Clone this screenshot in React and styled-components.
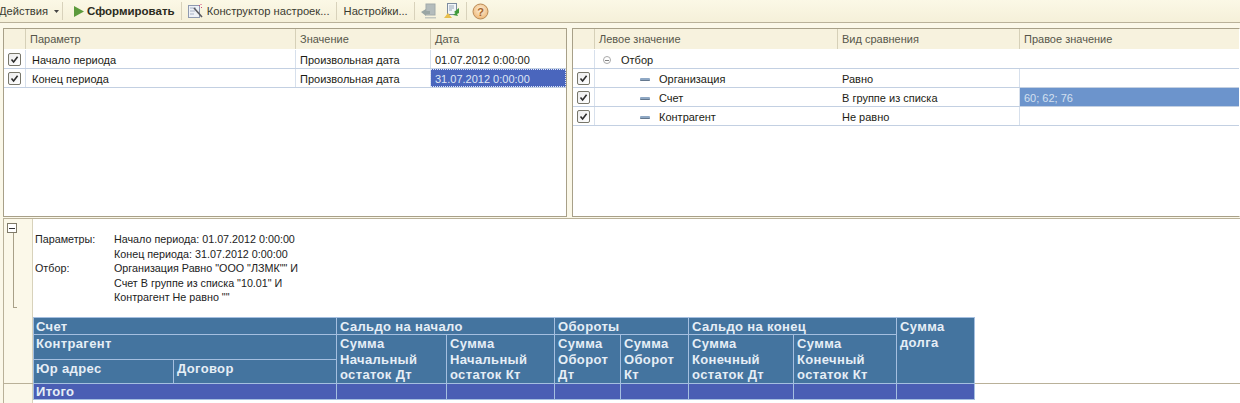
import React from "react";
import styled, { createGlobalStyle } from "styled-components";

const GlobalStyle = createGlobalStyle`
  html, body {
    margin: 0;
    padding: 0;
    background: #fbf8e9;
  }
  body {
    font-family: "Liberation Sans", Arial, sans-serif;
    font-size: 11px;
    color: #1c1c14;
  }
`;

const Page = styled.div`
  width: 1240px;
  height: 403px;
  overflow: hidden;
  display: flex;
  flex-direction: column;
`;

const Toolbar = styled.div`
  height: 22px;
  display: flex;
  align-items: center;
  background: linear-gradient(#fbf8e6, #f5f0d9);
  border-bottom: 1px solid #b9b199;
  box-sizing: content-box;
  color: #3a3a30;
`;

const ToolText = styled.span`
  white-space: nowrap;
  font-size: ${(props) => (props.$bold ? 11.5 : 11.2)}px;
  margin-left: ${(props) => props.$left || 0}px;
  font-weight: ${(props) => (props.$bold ? 700 : 400)};
  color: ${(props) => (props.$bold ? "#2b2b20" : "#3a3a30")};
`;

const ToolSep = styled.div`
  width: 1px;
  height: 18px;
  background: #d8d2bb;
  margin-left: ${(props) => props.$left}px;
`;

const ToolIcon = styled.svg`
  flex: none;
  margin-left: ${(props) => props.$left}px;
`;

const Panels = styled.div`
  display: flex;
  gap: 5px;
  padding: 5px 0 0 3px;
  height: 189px;
`;

const Panel = styled.div`
  width: ${(props) => props.$width}px;
  height: 189px;
  box-sizing: border-box;
  background: #fff;
  border: 1px solid #a8a088;
  border-right-color: ${(props) => (props.$open ? "transparent" : "#a8a088")};
`;

const Row = styled.div`
  display: grid;
  grid-template-columns: ${(props) => props.$cols};
  height: ${(props) => (props.$head ? 21 : 19)}px;
  box-sizing: border-box;
  background: ${(props) => (props.$head ? "#f7f2de" : "#fff")};
  border-bottom: 1px solid ${(props) => (props.$head ? "#fff" : "#c3d0e2")};
`;

const HeadCell = styled.div`
  display: flex;
  align-items: center;
  padding-left: 4px;
  border-left: 1px solid ${(props) => (props.$first ? "transparent" : "#d6d0b8")};
  color: #56564a;
  white-space: nowrap;
`;

const Cell = styled.div`
  display: flex;
  align-items: center;
  padding: 2px 0 0 ${(props) => props.$pad || 4}px;
  border-left: 1px solid ${(props) => (props.$first ? "transparent" : "#d7e0ec")};
  white-space: nowrap;
  color: ${(props) => (props.$value ? "#d4e0f0" : "#1c1c14")};
  background: ${(props) => (props.$value ? "#6c94cc" : "transparent")};
`;

const ActiveCell = styled(Cell)`
  background: #4a66bd;
  color: #dfe6f6;
  outline: 1px dotted #dfe6f6;
  outline-offset: -1px;
`;

const GroupCell = styled(Cell)`
  grid-column: 2 / -1;
`;

const KindCell = styled(Cell)`
  border-left-color: transparent;
`;

const CheckBox = styled.span`
  width: 11px;
  height: 11px;
  margin-top: -2px;
  border: 1px solid #77766a;
  border-radius: 2px;
  background: linear-gradient(135deg, #ececec, #fff);
  display: flex;
  align-items: center;
  justify-content: center;
`;

const TreeDash = styled.span`
  width: 10px;
  height: 3px;
  margin-left: ${(props) => props.$left}px;
  margin-right: 9px;
  border-radius: 1px;
  background: #8fa8c4;
  border: 0 solid #64788e;
  border-bottom-width: 1px;
  box-sizing: border-box;
`;

const TreeToggle = styled.span`
  width: 6px;
  height: 6px;
  margin-left: 3px;
  margin-right: 10px;
  border: 1px solid #a9a9a9;
  border-radius: 50%;
  display: flex;
  align-items: center;
  justify-content: center;
  &::after {
    content: "";
    width: 4px;
    height: 1px;
    background: #808080;
  }
`;

const Report = styled.div`
  flex: 1;
  display: flex;
  position: relative;
  margin: 1px 0 0 3px;
  border-top: 1px solid #b9b199;
  border-left: 1px solid #b9b199;
  background: #fff;
  min-height: 0;
`;

const Gutter = styled.div`
  width: 28px;
  flex: none;
  background: #fbf8e9;
  border-right: 1px solid #d8d2bb;
`;

const Fold = styled.div`
  width: 8px;
  height: 8px;
  margin: 4px 0 0 3px;
  border: 1px solid #7f7a68;
  background: #fff;
  display: flex;
  align-items: center;
  justify-content: center;
  &::after {
    content: "";
    width: 6px;
    height: 1px;
    background: #333;
  }
`;

const FoldLine = styled.div`
  width: 3px;
  height: 74px;
  margin-left: 9px;
  border-left: 1px solid #a8a088;
  border-bottom: 1px solid #a8a088;
`;

const ReportBody = styled.div`
  flex: 1;
  min-width: 0;
`;

const Settings = styled.div`
  height: 98px;
  padding: 13px 0 0 2px;
  box-sizing: border-box;
  font-size: 10.75px;
  line-height: 14.5px;
  color: #222;
  display: grid;
  grid-template-columns: 79px 1fr;
  align-content: start;
`;

const Table = styled.table`
  border-collapse: collapse;
  table-layout: fixed;
  width: 941px;
  font-size: 13px;
  font-weight: 700;
  letter-spacing: 0.35px;
  line-height: 15.5px;
  color: #e6eef6;
`;

const Th = styled.td`
  background: #44749f;
  border: 1px solid #a5bfe0;
  padding: 1px 0 0 ${(props) => (props.$first ? 2 : 3)}px;
  line-height: ${(props) => (props.$tight ? "15px" : "inherit")};
  vertical-align: top;
  overflow: hidden;
  white-space: nowrap;
`;

const TotalTh = styled(Th)`
  background: #4a5eb4;
  border-top-color: #a8a890;
  padding-top: 0;
  line-height: 14px;
  vertical-align: middle;
`;

const RuleLine = styled.div`
  position: absolute;
  left: ${(props) => props.$left}px;
  right: ${(props) => (props.$open ? 0 : "auto")};
  width: ${(props) => (props.$open ? "auto" : `${props.$width}px`)};
  top: 164px;
  height: 1px;
  background: #b9b199;
`;

const HeadRow = styled.tr`
  height: ${(props) => props.$height}px;
`;

const leftCols = "21px 270px 135px 1fr";
const rightCols = "21px 243px 182px 1fr";

const Check = () => (
  <CheckBox>
    <svg width="9" height="9" viewBox="0 0 9 9">
      <path d="M1.5 4.5 L3.6 7 L7.6 1.8" fill="none" stroke="#2c2c2c" strokeWidth="1.6" />
    </svg>
  </CheckBox>
);

const filters = [
  { name: "Организация", kind: "Равно", value: "" },
  { name: "Счет", kind: "В группе из списка", value: "60; 62; 76" },
  { name: "Контрагент", kind: "Не равно", value: "" },
];

const colWidths = [140, 163, 110, 108, 66, 68, 105, 103, 78];

export default function App() {
  return (
    <Page>
      <GlobalStyle />
      <Toolbar>
        <ToolText $left={-1}>Действия</ToolText>
        <ToolIcon $left={6} width="5" height="3" viewBox="0 0 5 3">
          <path d="M0 0h5L2.5 3z" fill="#444" />
        </ToolIcon>
        <ToolSep $left={3} />
        <ToolIcon $left={11} width="10" height="11" viewBox="0 0 10 11">
          <path d="M0 0 L10 5.5 L0 11z" fill="#5c9a3c" />
        </ToolIcon>
        <ToolText $left={3} $bold>Сформировать</ToolText>
        <ToolSep $left={6} />
        <ToolIcon $left={6} width="15" height="15" viewBox="0 0 15 15">
          <rect x="0.5" y="1.5" width="11" height="12" fill="#eef1f6" stroke="#8f9ab0" />
          <path d="M2 4h6M2 7h5M2 10h4" stroke="#a8b2c6" />
          <path d="M6 4 L14 13" stroke="#5a5a60" strokeWidth="1.6" />
          <path d="M11 1l1 1M14 3l-1 1M13 0v1" stroke="#d04a7a" />
        </ToolIcon>
        <ToolText $left={4}>Конструктор настроек...</ToolText>
        <ToolSep $left={6} />
        <ToolText $left={7}>Настройки...</ToolText>
        <ToolSep $left={6} />
        <ToolIcon $left={6} width="16" height="16" viewBox="0 0 16 16">
          <rect x="5" y="1" width="9" height="11" fill="#b4bcbc" stroke="#a2aaaa" />
          <path d="M0 9l5-3v2h4v3H5v2z" fill="#9aa6a4" />
          <rect x="4" y="14" width="11" height="1.5" fill="#c4c8c0" />
        </ToolIcon>
        <ToolIcon $left={7} width="16" height="16" viewBox="0 0 16 16">
          <rect x="3.5" y="0.5" width="9" height="11" fill="#f2f5f8" stroke="#7d8ca0" />
          <path d="M5 3h5M5 5h5M5 7h3" stroke="#9aa8b8" />
          <path d="M15 5l-5 4 1.5 1-2.5 2 5 1-1-2 2-1z" fill="#3f9a3a" />
          <path d="M0 15l4-5 4 5z" fill="#e8bf4c" />
        </ToolIcon>
        <ToolSep $left={6} />
        <ToolIcon $left={5} width="17" height="17" viewBox="0 0 17 17">
          <defs>
            <radialGradient id="helpFill" cx="0.5" cy="0.4" r="0.6">
              <stop offset="0" stopColor="#fdf1dc" />
              <stop offset="1" stopColor="#eeb777" />
            </radialGradient>
          </defs>
          <circle cx="8.5" cy="8.5" r="7.5" fill="url(#helpFill)" stroke="#b98a56" />
          <text x="8.5" y="12.5" textAnchor="middle" fontSize="11" fontWeight="700" fontFamily="Liberation Sans" fill="#a8642a">?</text>
        </ToolIcon>
      </Toolbar>
      <Panels>
        <Panel $width={564}>
          <Row $head $cols={leftCols}>
            <HeadCell $first />
            <HeadCell>Параметр</HeadCell>
            <HeadCell>Значение</HeadCell>
            <HeadCell>Дата</HeadCell>
          </Row>
          <Row $cols={leftCols}>
            <Cell $first $pad={3}><Check /></Cell>
            <Cell $pad={6}>Начало периода</Cell>
            <Cell>Произвольная дата</Cell>
            <Cell>01.07.2012 0:00:00</Cell>
          </Row>
          <Row $cols={leftCols}>
            <Cell $first $pad={3}><Check /></Cell>
            <Cell $pad={6}>Конец периода</Cell>
            <Cell>Произвольная дата</Cell>
            <ActiveCell>31.07.2012 0:00:00</ActiveCell>
          </Row>
        </Panel>
        <Panel $width={668} $open>
          <Row $head $cols={rightCols}>
            <HeadCell $first />
            <HeadCell>Левое значение</HeadCell>
            <HeadCell>Вид сравнения</HeadCell>
            <HeadCell>Правое значение</HeadCell>
          </Row>
          <Row $cols={rightCols}>
            <Cell $first />
            <GroupCell $pad={5}><TreeToggle />Отбор</GroupCell>
          </Row>
          {filters.map((item) => (
            <Row key={item.name} $cols={rightCols}>
              <Cell $first $pad={3}><Check /></Cell>
              <Cell $pad={1}><TreeDash $left={44} />{item.name}</Cell>
              <KindCell>{item.kind}</KindCell>
              {item.value ? <Cell $value>{item.value}</Cell> : <Cell />}
            </Row>
          ))}
        </Panel>
      </Panels>
      <Report>
        <Gutter>
          <Fold />
          <FoldLine />
        </Gutter>
        <ReportBody>
          <Settings>
            <span>Параметры:</span>
            <span>Начало периода: 01.07.2012 0:00:00</span>
            <span />
            <span>Конец периода: 31.07.2012 0:00:00</span>
            <span>Отбор:</span>
            <span>Организация Равно "ООО "ЛЗМК"" И</span>
            <span />
            <span>Счет В группе из списка "10.01" И</span>
            <span />
            <span>Контрагент Не равно ""</span>
          </Settings>
          <Table>
            <colgroup>
              {colWidths.map((w, i) => (
                <col key={i} width={w} />
              ))}
            </colgroup>
            <tbody>
              <HeadRow $height={17}>
                <Th $first $tight colSpan={2}>Счет</Th>
                <Th $tight colSpan={2}>Сальдо на начало</Th>
                <Th $tight colSpan={2}>Обороты</Th>
                <Th $tight colSpan={2}>Сальдо на конец</Th>
                <Th rowSpan={3}>Сумма<br />долга</Th>
              </HeadRow>
              <HeadRow $height={25}>
                <Th $first colSpan={2}>Контрагент</Th>
                <Th rowSpan={2}>Сумма<br />Начальный<br />остаток Дт</Th>
                <Th rowSpan={2}>Сумма<br />Начальный<br />остаток Кт</Th>
                <Th rowSpan={2}>Сумма<br />Оборот<br />Дт</Th>
                <Th rowSpan={2}>Сумма<br />Оборот<br />Кт</Th>
                <Th rowSpan={2}>Сумма<br />Конечный<br />остаток Дт</Th>
                <Th rowSpan={2}>Сумма<br />Конечный<br />остаток Кт</Th>
              </HeadRow>
              <HeadRow $height={24}>
                <Th $first>Юр адрес</Th>
                <Th>Договор</Th>
              </HeadRow>
              <HeadRow $height={16}>
                <TotalTh $first colSpan={2}>Итого</TotalTh>
                {colWidths.slice(2).map((w, i) => (
                  <TotalTh key={i} />
                ))}
              </HeadRow>
            </tbody>
          </Table>
        </ReportBody>
        <RuleLine $left={0} $width={29} />
        <RuleLine $left={971} $open />
      </Report>
    </Page>
  );
}
